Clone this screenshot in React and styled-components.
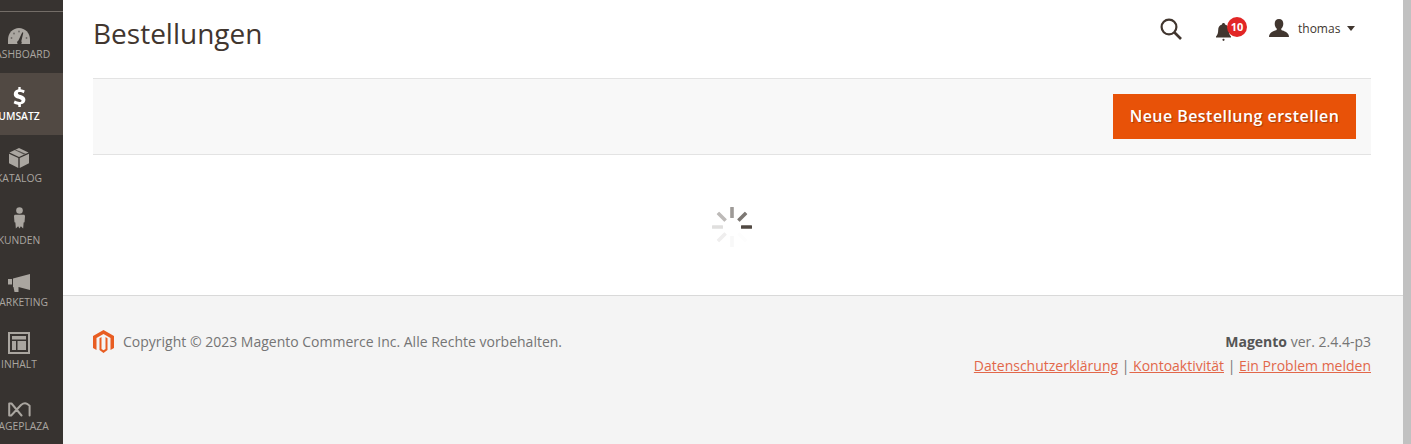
import styled, { createGlobalStyle } from 'styled-components';

const GlobalStyle = createGlobalStyle`
  html, body {
    margin: 0;
    height: 100%;
    overflow: hidden;
    background: #ffffff;
    font-family: 'Open Sans', 'Liberation Sans', sans-serif;
  }
  #root {
    height: 100%;
  }
`;

const menuItems = [
  { label: 'Dashboard', icon: <GaugeIcon />, iconTop: 17 },
  { label: 'Umsatz', icon: <DollarIcon />, iconTop: 14, active: true },
  { label: 'Katalog', icon: <BoxIcon />, iconTop: 13 },
  { label: 'Kunden', icon: <PersonIcon />, iconTop: 9 },
  { label: 'Marketing', icon: <MegaphoneIcon />, iconTop: 15 },
  { label: 'Inhalt', icon: <LayoutIcon />, iconTop: 11 },
  { label: 'Mageplaza', icon: <MageplazaIcon />, iconTop: 19 },
];

function GaugeIcon() {
  return (
    <svg width="22" height="16" viewBox="0 0 22 16">
      <path fill="#aaa6a0" d="M0 16v-4.500C0 5 5 0 11 0s11 5 11 11.500V16z" />
      <path fill="#373330" d="M9.700 16c-1-1.200-.7-3 .7-3.600l3.900-8.100 1 .4-2 8.600c.7 1 .6 2.100-.2 2.700z" />
      <circle cx="11" cy="3.500" r="0.900" fill="#6d6965" />
      <circle cx="6" cy="5.500" r="0.900" fill="#6d6965" />
      <circle cx="3.500" cy="10" r="0.900" fill="#6d6965" />
      <circle cx="18.500" cy="10" r="0.900" fill="#6d6965" />
    </svg>
  );
}

function DollarIcon() {
  return (
    <svg width="13" height="20" viewBox="0 0 14 22">
      <path fill="#ffffff" d="M5.700 0h2.600v2.400c1.800.2 3.300.7 4.500 1.400l-1.200 3c-1.300-.7-2.900-1.300-4.400-1.300-1.300 0-2 .5-2 1.300 0 .9 1 1.300 3 2 3 1 5.300 2.200 5.300 5.200 0 2.500-1.700 4.500-5 5V22H5.700v-2.300c-2-.2-3.900-.8-5.200-1.700l1.300-3.100c1.500.9 3.400 1.600 5.200 1.600 1.400 0 2.200-.5 2.200-1.400 0-.9-.9-1.400-3-2.100C3 12 .7 10.800.7 7.900c0-2.600 1.800-4.700 5-5.300z" />
    </svg>
  );
}

function BoxIcon() {
  return (
    <svg width="20" height="20" viewBox="0 0 20 20">
      <path fill="#aaa6a0" d="M10 0l9.500 4.500L10 9 .5 4.500z" />
      <path fill="#373330" d="M5.600 1.900l.9-.4 9.300 4.500-.9.500zM8.600 3.300l1-.5 9.200 4-.8.500z" opacity="0.750" />
      <path fill="#aaa6a0" d="M0 5.700l9.300 4.400V20L0 15.300zM20 5.700v9.600L10.700 20v-9.900z" />
    </svg>
  );
}

function PersonIcon() {
  return (
    <svg width="11" height="24" viewBox="0 0 12 24">
      <circle cx="6" cy="3.800" r="3.600" fill="#aaa6a0" />
      <path fill="#aaa6a0" d="M1.500 8.500h9c.8 0 1.500.7 1.500 1.500l-.5 6.500-1 .3-.5 6.700-2.500-2.500L6 23.500 4.500 21 2 23.500l-.5-6.700-1-.3L0 10c0-.8.700-1.500 1.500-1.500z" />
    </svg>
  );
}

function MegaphoneIcon() {
  return (
    <svg width="22" height="18" viewBox="0 0 22 18">
      <path fill="#aaa6a0" d="M0 5h4v5.500H0zM5 4.500L22 0v16L10.500 13v5H6.500l-1-5H5z" />
    </svg>
  );
}

function LayoutIcon() {
  return (
    <svg width="22" height="22" viewBox="0 0 22 22">
      <rect x="1" y="1" width="20" height="20" fill="none" stroke="#aaa6a0" strokeWidth="2" />
      <path fill="#aaa6a0" d="M4 4h14v3.500H4zM4 9h4v9H4zM9.500 9H18v9H9.500z" />
    </svg>
  );
}

function MageplazaIcon() {
  return (
    <svg width="23" height="15" viewBox="0 0 23 15">
      <path fill="none" stroke="#aaa6a0" strokeWidth="2" strokeLinejoin="round" strokeLinecap="round" d="M1.200 1.500v12h2L13 3c2.500-2 4.500-2 6-1.200l2.600 2v9.700M1.200 1.500h2.300l10 12" />
    </svg>
  );
}

function MagentoLogo() {
  return (
    <svg width="21" height="23" viewBox="0 0 21 23">
      <path fill="#e85d22" d="M10.500 0L21 6v12l-3.500 2V8l-7-4-7 4v12L0 18V6z" />
      <path fill="#e85d22" d="M8.500 7L6.500 8.200V20l4 3 4-3V8.200L12.500 7v12l-2 1.200-2-1.200z" />
    </svg>
  );
}

function SearchIcon() {
  return (
    <svg width="22" height="22" viewBox="0 0 22 22">
      <circle cx="9" cy="9" r="7.400" fill="none" stroke="#41362f" strokeWidth="2.200" />
      <path d="M14.500 14.500L21 21" stroke="#41362f" strokeWidth="2.600" />
    </svg>
  );
}

function BellIcon() {
  return (
    <svg width="15" height="18" viewBox="0 0 15 18">
      <path fill="#41362f" d="M7.500 0c1 0 1.500.6 1.500 1.500 2.600.7 3.800 2.800 3.800 5.500 0 3 .7 5 2.200 6.500v1H0v-1C1.500 12 2.200 10 2.200 7c0-2.700 1.200-4.800 3.800-5.500C6 .6 6.500 0 7.500 0z" />
      <circle cx="7.500" cy="16.800" r="1.100" fill="#41362f" />
    </svg>
  );
}

function UserIcon() {
  return (
    <svg width="20" height="18" viewBox="0 0 20 18">
      <path fill="#41362f" d="M10 0c2.800 0 4.300 2 4.300 4.800 0 2-.8 3.800-2 4.800v1.500c2.500 1 7.700 2.200 7.700 6.900H0c0-4.700 5.200-5.900 7.700-6.900V9.600c-1.200-1-2-2.800-2-4.800C5.700 2 7.200 0 10 0z" />
    </svg>
  );
}

function Spinner() {
  const bars = [
    { angle: 90, color: '#514943' },
    { angle: 45, color: '#7d7874' },
    { angle: 0, color: '#9e9a97' },
    { angle: -45, color: '#bdbab8' },
    { angle: -90, color: '#e0dfde' },
    { angle: -135, color: '#efeeee' },
    { angle: 180, color: '#f8f8f8' },
    { angle: 135, color: '#fdfdfd' },
  ];
  return (
    <svg width="44" height="44" viewBox="-22 -22 44 44">
      {bars.map((bar) => (
        <rect key={bar.angle} x="-1.800" y="-20" width="3.600" height="11" rx="0.500" fill={bar.color} transform={`rotate(${bar.angle})`} />
      ))}
    </svg>
  );
}

export default function App() {
  return (
    <>
      <GlobalStyle />
      <Page>
        <Sidebar>
          <MenuList>
            {menuItems.map((item) => (
              <MenuItem key={item.label} $active={item.active}>
                <MenuIcon $top={item.iconTop}>{item.icon}</MenuIcon>
                <MenuLabel $active={item.active}>{item.label}</MenuLabel>
              </MenuItem>
            ))}
          </MenuList>
        </Sidebar>
        <Main>
          <Content>
            <PageHeader>
              <PageTitle>Bestellungen</PageTitle>
              <HeaderActions>
                <SearchBox><SearchIcon /></SearchBox>
                <Notifications>
                  <BellIcon />
                  <Badge>10</Badge>
                </Notifications>
                <UserMenu>
                  <UserIcon />
                  <UserName>thomas</UserName>
                  <Caret />
                </UserMenu>
              </HeaderActions>
            </PageHeader>
            <ActionBar>
              <PrimaryButton>Neue Bestellung erstellen</PrimaryButton>
            </ActionBar>
            <Loader>
              <Spinner />
            </Loader>
          </Content>
          <Footer>
            <Copyright>
              <MagentoLogo />
              <CopyrightText>Copyright © 2023 Magento Commerce Inc. Alle Rechte vorbehalten.</CopyrightText>
            </Copyright>
            <FooterInfo>
              <Version><strong>Magento</strong> ver. 2.4.4-p3</Version>
              <FooterLinks>
                <FooterLink>Datenschutzerklärung</FooterLink>
                {' |'}
                <FooterLink> Kontoaktivität</FooterLink>
                {' | '}
                <FooterLink>Ein Problem melden</FooterLink>
              </FooterLinks>
            </FooterInfo>
          </Footer>
        </Main>
        <Scrollbar />
      </Page>
    </>
  );
}

const Page = styled.div`
  display: flex;
  height: 444px;
  overflow: hidden;
`;

const Sidebar = styled.nav`
  flex: 0 0 63px;
  width: 63px;
  overflow: hidden;
  background: #373330;
  padding-top: 11px;
  box-sizing: border-box;
`;

const MenuList = styled.div`
  width: 88px;
  margin-left: -25px;
`;

const MenuItem = styled.div`
  display: flex;
  flex-direction: column;
  align-items: center;
  height: 62px;
  background: ${(props) => (props.$active ? '#514943' : 'transparent')};

  &:first-child {
    box-shadow: inset 0 1px 0 #736d67;
  }
`;

const MenuIcon = styled.div`
  display: flex;
  align-items: flex-start;
  justify-content: center;
  height: 35px;
  padding-top: ${(props) => props.$top}px;
  box-sizing: border-box;

  svg {
    flex: none;
  }
`;

const MenuLabel = styled.span`
  font-size: 10.3px;
  line-height: 16px;
  text-transform: uppercase;
  white-space: nowrap;
  color: ${(props) => (props.$active ? '#ffffff' : '#aaa6a0')};
  font-weight: ${(props) => (props.$active ? 600 : 400)};
`;

const Main = styled.div`
  flex: 1;
  display: flex;
  flex-direction: column;
  min-width: 0;
`;

const Content = styled.div`
  height: 295px;
  padding: 0 32px 0 30px;
  box-sizing: border-box;
  background: #ffffff;
`;

const PageHeader = styled.header`
  display: flex;
  align-items: flex-start;
  justify-content: space-between;
  height: 78px;
`;

const PageTitle = styled.h1`
  margin: 13px 0 0;
  font-size: 28px;
  line-height: 40px;
  font-weight: 400;
  color: #41362f;
`;

const HeaderActions = styled.div`
  display: flex;
  align-items: center;
  height: 58px;
`;

const SearchBox = styled.div`
  display: flex;
  align-items: center;
  width: 56px;
  height: 22px;
`;

const Notifications = styled.div`
  position: relative;
  display: flex;
  width: 53px;
  height: 18px;
  margin-top: 5px;
`;

const Badge = styled.span`
  position: absolute;
  left: 11px;
  top: -6px;
  width: 20px;
  height: 20px;
  border-radius: 50%;
  background: #e22626;
  color: #ffffff;
  font-size: 11px;
  font-weight: 700;
  line-height: 20px;
  text-align: center;
`;

const UserMenu = styled.div`
  display: flex;
  align-items: center;
  width: 102px;
  height: 18px;
  margin-top: -2px;
`;

const UserName = styled.span`
  margin-left: 9px;
  font-size: 12px;
  color: #41362f;
`;

const Caret = styled.span`
  width: 0;
  height: 0;
  margin-left: 7px;
  border-left: 4px solid transparent;
  border-right: 4px solid transparent;
  border-top: 5px solid #41362f;
`;

const ActionBar = styled.div`
  display: flex;
  align-items: center;
  justify-content: flex-end;
  height: 77px;
  padding-right: 15px;
  box-sizing: border-box;
  background: #f8f8f8;
  border-top: 1px solid #e3e3e3;
  border-bottom: 1px solid #e3e3e3;
`;

const PrimaryButton = styled.button`
  width: 243px;
  height: 45px;
  margin-bottom: 1px;
  padding: 0;
  border: 0;
  background: #e85208;
  color: #ffffff;
  font-family: inherit;
  font-size: 16px;
  font-weight: 600;
  letter-spacing: 0.45px;
  text-shadow: 1px 1px 1px rgba(0, 0, 0, 0.3);
`;

const Loader = styled.div`
  display: flex;
  justify-content: center;
  padding-top: 50px;
`;

const Footer = styled.footer`
  flex: 1;
  display: flex;
  justify-content: space-between;
  padding: 34px 32px 0 30px;
  background: #f4f4f4;
  border-top: 1px solid #d9d9d9;
  font-size: 14px;
  color: #757575;
`;

const Copyright = styled.div`
  display: flex;
  align-items: flex-start;
  gap: 9px;
  line-height: 22px;
  height: 24px;
`;

const CopyrightText = styled.span`
  margin-top: 1px;
`;

const FooterInfo = styled.div`
  text-align: right;
`;

const Version = styled.div`
  line-height: 22px;
  margin: 1px 0 2px;

  strong {
    font-weight: 700;
    color: #555555;
  }
`;

const FooterLinks = styled.div`
  line-height: 22px;
  white-space: pre;
`;

const FooterLink = styled.a`
  color: #e2674a;
  text-decoration: underline;
`;

const Scrollbar = styled.div`
  flex: 0 0 8px;
  background: #c1c1c1;
`;
